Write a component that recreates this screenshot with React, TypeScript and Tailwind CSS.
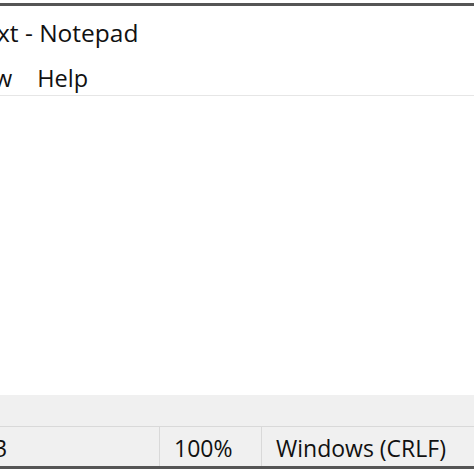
import React from "react";

export default function App() {
  return (
    <div
      className="w-[474px] h-[474px] bg-white overflow-hidden flex flex-col text-[#111111]"
      style={{ fontFamily: '"Open Sans", "Noto Sans", sans-serif' }}
    >
      <div className="h-[3px] bg-white" />
      <div className="h-[3px] bg-[#555555]" />
      <div className="h-[54px] flex items-center">
        <span className="text-[24.5px] leading-none -ml-[3px] whitespace-nowrap">xt - Notepad</span>
      </div>
      <div className="h-[36px] flex items-start pt-[7px] border-b border-[#e6e6e6]">
        <span className="text-[23.5px] leading-none -ml-[6px] whitespace-nowrap">w</span>
        <span className="text-[23.5px] leading-none ml-[25px] whitespace-nowrap">Help</span>
      </div>
      <div className="flex-1 bg-white" />
      <div className="h-[32px] bg-[#f0f0f0] border-b border-[#d9d9d9]" />
      <div className="h-[39px] bg-[#f0f0f0] flex text-[23px] leading-none">
        <div className="w-[160px] border-r border-[#d9d9d9] flex items-center overflow-hidden pt-[3px]">
          <span className="-ml-[6px]">3</span>
        </div>
        <div className="w-[102px] border-r border-[#d9d9d9] flex items-center pl-[14px] pt-[3px]">
          <span>100%</span>
        </div>
        <div className="flex-1 flex items-center pl-[14px] pt-[3px]">
          <span>Windows (CRLF)</span>
        </div>
      </div>
      <div className="h-[3px] bg-[#555555]" />
      <div className="h-[5px] bg-white" />
    </div>
  );
}
